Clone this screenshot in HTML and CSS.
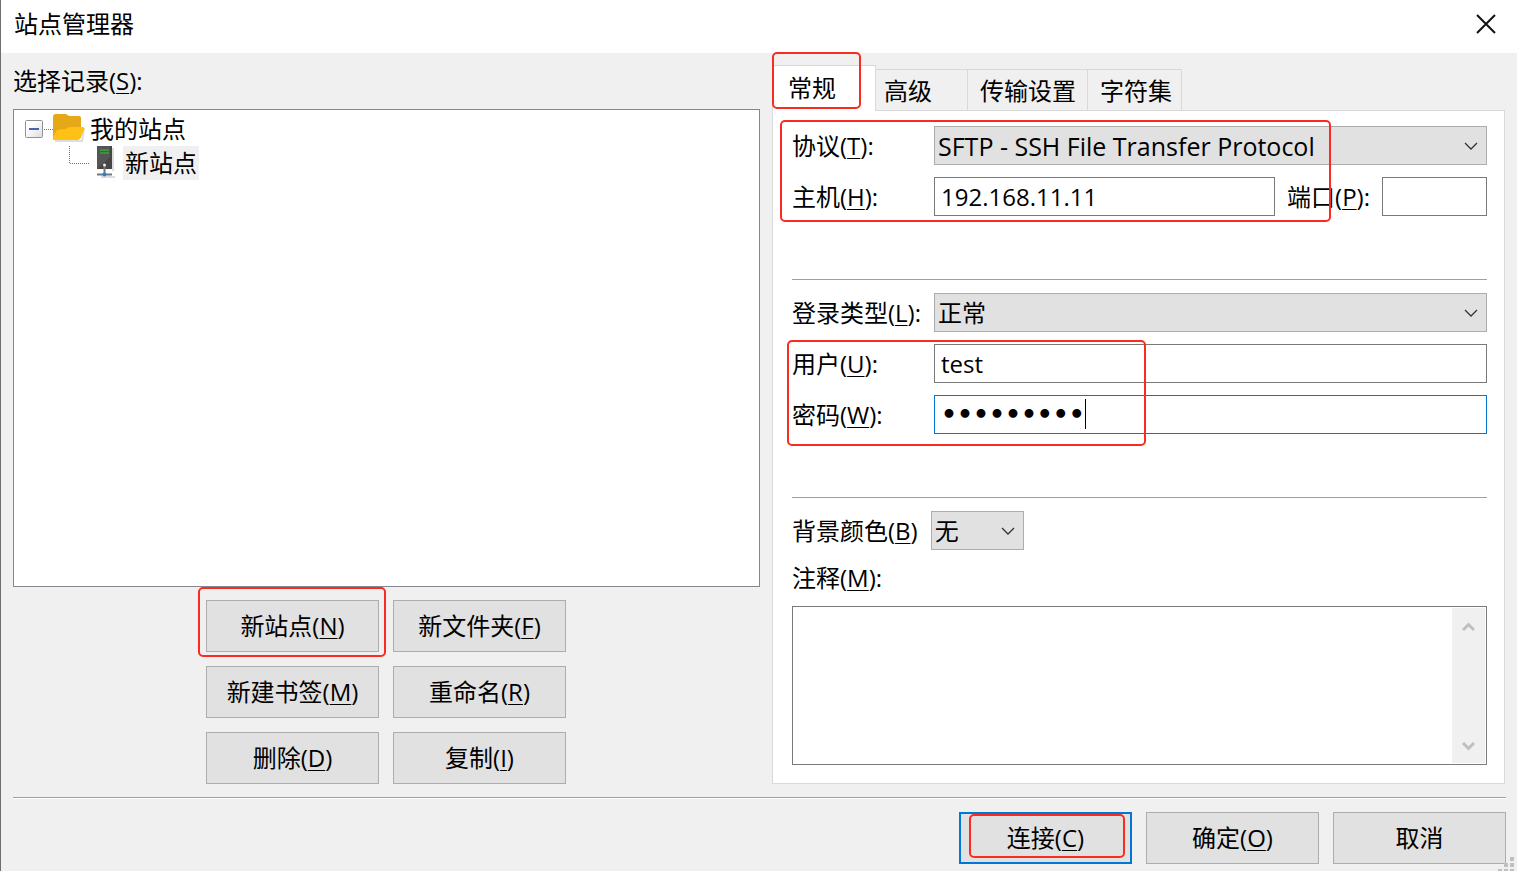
FILE: index.html
```html
<!DOCTYPE html>
<html lang="zh-CN">
<head>
<meta charset="utf-8">
<title>站点管理器</title>
<link rel="stylesheet" href="styles.css">
</head>
<body>
<div class="window">
  <header class="titlebar">
    <h1 class="title">站点管理器</h1>
    <button class="close" type="button" aria-label="关闭">
      <svg width="20" height="20" viewBox="0 0 20 20"><path d="M1 1 19 19M19 1 1 19" stroke="#111" stroke-width="2" fill="none"/></svg>
    </button>
  </header>

  <main class="columns">
    <section class="sites">
      <h2 class="heading" id="tree-label">选择记录(<u>S</u>):</h2>
      <ul class="tree" role="tree" aria-labelledby="tree-label">
        <li role="treeitem" aria-expanded="true">
          <div class="node">
            <svg width="76" height="34" viewBox="0 0 76 34">
              <defs><linearGradient id="box" x1="0" y1="0" x2="1" y2="1"><stop offset=".3" stop-color="#fff"/><stop offset="1" stop-color="#dcdcdc"/></linearGradient></defs>
              <rect x="11.500" y="8.500" width="17" height="17" rx="1" fill="url(#box)" stroke="#919191"/>
              <path d="M15 17H25" stroke="#4964ae" stroke-width="2"/>
              <path d="M30 17.500H39" stroke="#777" stroke-dasharray="1 1"/>
              <path d="M41 29H68L70 16" fill="none" stroke="#ddd" stroke-width="2"/>
              <path d="M39 5q0-3 3-3h10l3 2h10q2 0 2 2v20H39z" fill="#e6a817"/>
              <path d="m43 18 8-1 5-2h13q2 0 1 3l-3 7q-1 3-3 3H40q-2 0-1-3z" fill="#ffc114"/>
            </svg>
            <span class="name">我的站点</span>
          </div>
          <ul class="branch" role="group">
            <li role="treeitem" aria-selected="true">
              <div class="node">
                <svg width="109" height="34" viewBox="0 0 109 34">
                  <path d="M55.500 0V17.500H75" fill="none" stroke="#777" stroke-dasharray="1 1"/>
                  <path d="M99 2V25M87 31H101" stroke="#ddd" stroke-width="2"/>
                  <path d="M83 0H98V23H83z" fill="#555"/>
                  <path d="M96 0H98V23H83L96 11z" fill="#464646"/>
                  <path d="M86 4H95M86 7H95" stroke="#23cf2c" stroke-width="1"/>
                  <path d="M90.500 20V29M83 28.500H98" stroke="#777" stroke-width="2"/>
                  <circle cx="90.500" cy="19" r="1.500" fill="#eee"/>
                  <circle cx="90.500" cy="28.500" r="2" fill="#1d85dc"/>
                </svg>
                <span class="name selected">新站点</span>
              </div>
            </li>
          </ul>
        </li>
      </ul>
      <div class="actions">
        <div class="marked">
          <button class="button" type="button"><span>新站点(<u>N</u>)</span></button>
          <span class="mark mark-new"></span>
        </div>
        <button class="button" type="button"><span>新文件夹(<u>F</u>)</span></button>
        <button class="button" type="button"><span>新建书签(<u>M</u>)</span></button>
        <button class="button" type="button"><span>重命名(<u>R</u>)</span></button>
        <button class="button" type="button"><span>删除(<u>D</u>)</span></button>
        <button class="button" type="button"><span>复制(<u>I</u>)</span></button>
      </div>
    </section>

    <section class="details">
      <div class="tabs" role="tablist">
        <div class="marked">
          <button class="tab current" type="button" role="tab" aria-selected="true">常规</button>
          <span class="mark mark-tab"></span>
        </div>
        <button class="tab advanced" type="button" role="tab">高级</button>
        <button class="tab" type="button" role="tab">传输设置</button>
        <button class="tab charset" type="button" role="tab">字符集</button>
      </div>
      <form class="panel" role="tabpanel">
        <div class="group marked">
          <div class="row">
            <label for="protocol">协议(<u>T</u>):</label>
            <div class="dropdown">
              <select class="protocol" id="protocol"><option>SFTP - SSH File Transfer Protocol</option></select>
              <svg class="chevron" width="14" height="8" viewBox="0 0 14 8"><path d="m1 1 6 6 6-6" fill="none" stroke="#333" stroke-width="1.300"/></svg>
            </div>
          </div>
          <div class="row">
            <label for="host">主机(<u>H</u>):</label>
            <div class="endpoint">
              <input class="text" id="host" type="text" value="192.168.11.11">
              <label for="port">端口(<u>P</u>):</label>
              <input class="text port" id="port" type="text">
            </div>
          </div>
          <span class="mark mark-server"></span>
        </div>

        <hr class="rule">

        <div class="group">
          <div class="row">
            <label for="logon">登录类型(<u>L</u>):</label>
            <div class="dropdown">
              <select id="logon"><option>正常</option></select>
              <svg class="chevron" width="14" height="8" viewBox="0 0 14 8"><path d="m1 1 6 6 6-6" fill="none" stroke="#333" stroke-width="1.300"/></svg>
            </div>
          </div>
          <div class="group marked">
            <div class="row">
              <label for="user">用户(<u>U</u>):</label>
              <input class="text" id="user" type="text" value="test">
            </div>
            <div class="row">
              <label for="password">密码(<u>W</u>):</label>
              <div class="secret">
                <input class="text password" id="password" type="password" value="123456789">
                <span class="caret"></span>
              </div>
            </div>
            <span class="mark mark-login"></span>
          </div>
        </div>

        <hr class="rule">

        <div class="colour">
          <label for="colour">背景颜色(<u>B</u>)</label>
          <div class="dropdown short">
            <select id="colour"><option>无</option></select>
            <svg class="chevron" width="14" height="8" viewBox="0 0 14 8"><path d="m1 1 6 6 6-6" fill="none" stroke="#333" stroke-width="1.300"/></svg>
          </div>
        </div>
        <label class="notes-label" for="notes">注释(<u>M</u>):</label>
        <div class="notes">
          <textarea id="notes"></textarea>
          <div class="scrollbar">
            <svg width="13" height="10" viewBox="0 0 13 10"><path d="m1 8 5.500-5.500L12 8" fill="none" stroke="#bfbfbf" stroke-width="3"/></svg>
            <svg width="13" height="10" viewBox="0 0 13 10"><path d="m1 2 5.500 5.500L12 2" fill="none" stroke="#bfbfbf" stroke-width="3"/></svg>
          </div>
        </div>
      </form>
    </section>
  </main>

  <footer class="footer">
    <div class="marked">
      <button class="button default" type="button"><span>连接(<u>C</u>)</span></button>
      <span class="mark mark-connect"></span>
    </div>
    <button class="button" type="button"><span>确定(<u>O</u>)</span></button>
    <button class="button" type="button"><span>取消</span></button>
  </footer>
  <svg class="grip" width="18" height="14" viewBox="0 0 18 14"><path d="M12 0h4v4h-4zM6 6h4v4H6zM12 6h4v4h-4zM0 12h4v2H0zM6 12h4v2H6zM12 12h4v2h-4z" fill="#bfbfbf"/></svg>
</div>
</body>
</html>
```

FILE: styles.css
```css
* {
  box-sizing: border-box;
}

body {
  margin: 0;
  color: #000;
  background: #f0f0f0;
}

body,
button,
input,
select,
textarea {
  font-family: "Open Sans", "Noto Sans CJK SC", sans-serif;
  font-size: 24px;
  line-height: 32px;
}

u {
  text-decoration-thickness: 1px;
  text-underline-offset: 3px;
}

.window {
  position: relative;
  display: flex;
  flex-direction: column;
  min-height: 100vh;
  border-left: 1px solid #6e6e6e;
}

.titlebar {
  display: flex;
  align-items: center;
  justify-content: space-between;
  height: 53px;
  padding: 0 21px 5px 13px;
  background: #fff;
}

.title,
.heading {
  margin: 0;
  font-size: 24px;
  font-weight: 400;
}

.close {
  display: flex;
  padding: 0;
  border: 0;
  background: none;
}

.columns {
  flex: 1;
  display: grid;
  grid-template-columns: 747fr 733fr;
  gap: 12px;
  padding: 12px 12px 13px;
}

.sites,
.details {
  display: flex;
  flex-direction: column;
  min-width: 0;
}

.heading {
  margin-bottom: 12px;
}

.tree {
  flex: 1;
  margin: 0;
  padding: 2px 0 0;
  list-style: none;
  background: #fff;
  border: 1px solid #828790;
}

.branch {
  margin: 0;
  padding: 0;
  list-style: none;
}

.node {
  display: flex;
  align-items: center;
  height: 34px;
}

.name.selected {
  padding: 1px 2px;
  background: #f0f0f0;
}

.actions {
  display: grid;
  grid-template-columns: 173px 173px;
  justify-content: center;
  gap: 14px;
  margin: 13px 1px 0 0;
}

.button {
  display: block;
  width: 173px;
  height: 52px;
  padding: 0;
  color: #000;
  background: #e1e1e1;
  border: 1px solid #adadad;
}

.button.default {
  border: 2px solid #0078d7;
}

.tabs {
  z-index: 1;
  display: flex;
  align-items: flex-end;
  margin-bottom: -1px;
}

.tab {
  height: 42px;
  padding: 2px 11px 0 12px;
  color: #000;
  background: #f0f0f0;
  border: 1px solid #d9d9d9;
  border-left: 0;
}

.tab.current {
  display: block;
  width: 104px;
  height: 46px;
  padding: 0 0 2px 15px;
  text-align: left;
  background: #fff;
  border-left: 1px solid #d9d9d9;
  border-bottom: 0;
}

.tab.advanced {
  width: 92px;
  padding-left: 8px;
  text-align: left;
}

.tab.charset {
  padding-right: 9px;
}

.panel {
  flex: 1;
  display: flex;
  flex-direction: column;
  padding: 15px 17px 18px 19px;
  background: #fff;
  border: 1px solid #d9d9d9;
}

.group {
  display: flex;
  flex-direction: column;
  gap: 12px;
}

.row {
  display: grid;
  grid-template-columns: 142px minmax(0, 1fr);
  align-items: center;
}

.text,
select {
  width: 100%;
  height: 39px;
  margin: 0;
  color: #000;
  border-radius: 0;
  outline: 0;
}

.text {
  padding: 0 6px 1px;
  background: #fff;
  border: 1px solid #7a7a7a;
}

.endpoint {
  display: flex;
  align-items: center;
  gap: 12px;
}

.endpoint #host {
  flex: 1;
  min-width: 0;
}

.endpoint .port {
  flex: none;
  width: 105px;
}

.dropdown,
.secret,
.marked {
  position: relative;
}

select {
  display: block;
  appearance: none;
  padding: 0 36px 0 3px;
  background: #e1e1e1;
  border: 1px solid #adadad;
}

.protocol {
  font-size: 25px;
}

.chevron {
  position: absolute;
  top: 16px;
  right: 9px;
  pointer-events: none;
}

.password {
  display: block;
  font-family: "DejaVu Sans", sans-serif;
  font-size: 25px;
  font-weight: 700;
  border-color: #0078d7;
}

.caret {
  position: absolute;
  top: 4px;
  left: 151px;
  width: 1px;
  height: 30px;
  background: #000;
}

.rule {
  width: 100%;
  height: 1px;
  margin: 63px 0 13px;
  background: #a0a0a0;
  border: 0;
}

.colour {
  display: flex;
  align-items: center;
  gap: 13px;
}

.dropdown.short {
  width: 93px;
}

.notes-label {
  margin: 12px 0;
}

.notes {
  flex: 1;
  display: flex;
  min-height: 120px;
  padding: 1px;
  border: 1px solid #7a7a7a;
}

.notes textarea {
  flex: 1;
  padding: 4px;
  background: #fff;
  border: 0;
  outline: 0;
  resize: none;
}

.scrollbar {
  display: flex;
  flex-direction: column;
  align-items: center;
  justify-content: space-between;
  width: 33px;
  padding: 14px 0 12px;
  background: #f0f0f0;
}

.footer {
  display: flex;
  justify-content: flex-end;
  gap: 14px;
  margin: 0 11px 0 12px;
  padding: 14px 0 7px;
  border-top: 1px solid #a0a0a0;
  box-shadow: inset 0 1px #fff;
}

.grip {
  position: absolute;
  right: 1px;
  bottom: 0;
}

.mark {
  position: absolute;
  border: 2px solid #fb2c1f;
  border-radius: 5px;
  pointer-events: none;
}

.mark-new {
  inset: -13px -7px -5px -8px;
}

.mark-tab {
  inset: -13px 15px 2px 0;
}

.mark-server {
  top: -6px;
  bottom: -6px;
  left: -12px;
  width: 551px;
}

.mark-login {
  top: -4px;
  bottom: -12px;
  left: -5px;
  width: 359px;
}

.mark-connect {
  inset: 2px 7px 6px 10px;
}
```
